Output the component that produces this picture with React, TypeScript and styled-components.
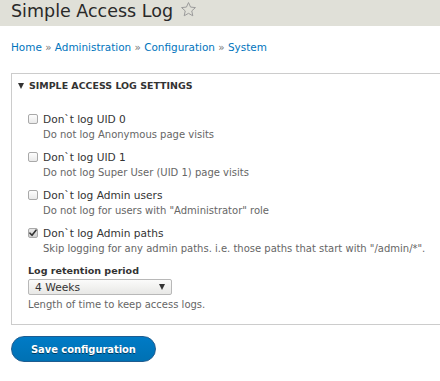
import styled, { createGlobalStyle } from "styled-components";
import { FC } from "react";

const GlobalStyle = createGlobalStyle`
  html, body {
    margin: 0;
    padding: 0;
    background: #fff;
    overflow: hidden;
  }
  body {
    font-family: "DejaVu Sans", Verdana, sans-serif;
    color: #333;
  }
`;

const Colors = {
  headerBg: "#e0e0d8",
  text: "#333",
  muted: "#666",
  link: "#0074bd",
  border: "#ccc",
};

const options = [
  {
    label: "Don`t log UID 0",
    description: "Do not log Anonymous page visits",
    checked: false,
  },
  {
    label: "Don`t log UID 1",
    description: "Do not log Super User (UID 1) page visits",
    checked: false,
  },
  {
    label: "Don`t log Admin users",
    description: 'Do not log for users with "Administrator" role',
    checked: false,
  },
  {
    label: "Don`t log Admin paths",
    description:
      'Skip logging for any admin paths. i.e. those paths that start with "/admin/*".',
    checked: true,
  },
];

export default function App() {
  return (
    <>
      <GlobalStyle />
      <Header>
        <Title>Simple Access Log</Title>
        <StarIcon />
      </Header>

      <Main>
        <Breadcrumb>
          <a href="#">Home</a>
          <Sep>»</Sep>
          <a href="#">Administration</a>
          <Sep>»</Sep>
          <a href="#">Configuration</a>
          <Sep>»</Sep>
          <a href="#">System</a>
        </Breadcrumb>

        <Fieldset>
          <Legend>
            <Triangle />
            Simple Access Log Settings
          </Legend>

          <FieldsetBody>
            {options.map((o) => (
              <CheckboxItem key={o.label} {...o} />
            ))}

            <FieldLabel>Log retention period</FieldLabel>
            <SelectBox>
              <span>4 Weeks</span>
              <SelectArrow />
            </SelectBox>
            <Description>Length of time to keep access logs.</Description>
          </FieldsetBody>
        </Fieldset>

        <SaveButton type="button">Save configuration</SaveButton>
      </Main>
    </>
  );
}

const CheckboxItem: FC<{
  label: string;
  description: string;
  checked: boolean;
}> = ({ label, description, checked }) => (
  <Item>
    <ItemRow>
      <Checkbox $checked={checked}>
        {checked && (
          <svg width="8" height="8" viewBox="0 0 8 8">
            <path
              d="M1 4.2 L3 6.3 L7 1.2"
              fill="none"
              stroke="#333"
              strokeWidth="1.6"
              strokeLinecap="round"
              strokeLinejoin="round"
            />
          </svg>
        )}
      </Checkbox>
      <ItemLabel>{label}</ItemLabel>
    </ItemRow>
    <ItemDescription>{description}</ItemDescription>
  </Item>
);

const StarIcon = () => (
  <StarSvg width="17" height="17" viewBox="0 0 24 24">
    <path
      d="M12 2.2 L14.9 8.6 L21.8 9.3 L16.6 14 L18.1 20.9 L12 17.4 L5.9 20.9 L7.4 14 L2.2 9.3 L9.1 8.6 Z"
      fill="none"
      stroke="#9a9a9a"
      strokeWidth="1.4"
      strokeLinejoin="round"
    />
  </StarSvg>
);

const Header = styled.header`
  height: 26px;
  box-sizing: border-box;
  background: ${Colors.headerBg};
  padding: 0 0 6px 11px;
  display: flex;
  align-items: flex-end;
  gap: 7px;
  overflow: hidden;
`;

const Title = styled.h1`
  margin: 0;
  font-size: 17.5px;
  line-height: 18px;
  font-weight: normal;
  color: #292929;
  white-space: nowrap;
`;

const StarSvg = styled.svg`
  flex: none;
  margin-bottom: 2px;
`;

const Main = styled.main`
  padding: 0 0 0 11px;
`;

const Breadcrumb = styled.nav`
  margin-top: 13px;
  font-size: 10.45px;
  line-height: 16px;
  white-space: nowrap;

  a {
    color: ${Colors.link};
    text-decoration: none;
  }
`;

const Sep = styled.span`
  color: #777;
  margin: 0 3.3px;
`;

/* the fieldset runs off the right side of the window in the screenshot */
const Fieldset = styled.section`
  margin-top: 18px;
  border: 1px solid ${Colors.border};
  border-right: none;
  padding: 4px 0 11px;
`;

const Legend = styled.div`
  display: flex;
  align-items: center;
  padding-left: 6px;
  gap: 5px;
  font-size: 9.45px;
  line-height: 16px;
  font-weight: bold;
  text-transform: uppercase;
  color: ${Colors.text};
`;

const Triangle = styled.span`
  width: 0;
  height: 0;
  border-left: 3px solid transparent;
  border-right: 3px solid transparent;
  border-top: 6px solid #333;
`;

const FieldsetBody = styled.div`
  padding: 17px 0 0 16px;
`;

const Item = styled.div`
  margin-bottom: 6px;
`;

const ItemRow = styled.div`
  display: flex;
  align-items: center;
  gap: 5px;
  height: 16px;
`;

const Checkbox = styled.span<{ $checked: boolean }>`
  width: 10px;
  height: 10px;
  box-sizing: border-box;
  border: 1px solid #a9a9a9;
  border-radius: 2px;
  background: ${(p) =>
    p.$checked
      ? "linear-gradient(#e8e8e8, #cfcfcf)"
      : "linear-gradient(#fdfdfd, #e9e9e9)"};
  display: flex;
  align-items: center;
  justify-content: center;
`;

const ItemLabel = styled.span`
  font-size: 10.6px;
  line-height: 16px;
  color: ${Colors.text};
  white-space: nowrap;
`;

const ItemDescription = styled.div`
  padding-left: 15px;
  font-size: 10px;
  line-height: 16px;
  color: ${Colors.muted};
  white-space: nowrap;
`;

const FieldLabel = styled.div`
  margin-top: 4px;
  font-size: 9.55px;
  line-height: 16px;
  font-weight: bold;
  color: ${Colors.text};
`;

const SelectBox = styled.div`
  width: 144px;
  height: 16px;
  box-sizing: border-box;
  border: 1px solid #b8b8b8;
  border-radius: 2px;
  background: linear-gradient(#fbfbfa, #e8e8e6);
  display: flex;
  align-items: center;
  justify-content: space-between;
  padding: 0 6px 0 6px;
  font-size: 10.7px;
  color: #333;
`;

const SelectArrow = styled.span`
  width: 0;
  height: 0;
  border-left: 3.5px solid transparent;
  border-right: 3.5px solid transparent;
  border-top: 6px solid #333;
`;

const Description = styled.div`
  margin-top: 2px;
  font-size: 10px;
  line-height: 16px;
  color: ${Colors.muted};
`;

const SaveButton = styled.button`
  margin-top: 11px;
  height: 26px;
  padding: 0 19px;
  border: 1px solid #1e5c90;
  border-radius: 20px;
  background: linear-gradient(#007bc6, #0071b3);
  color: #fff;
  font-family: "DejaVu Sans", Verdana, sans-serif;
  font-size: 9.9px;
  font-weight: bold;
  text-shadow: 0 1px rgba(0, 0, 0, 0.5);
  cursor: pointer;
`;
